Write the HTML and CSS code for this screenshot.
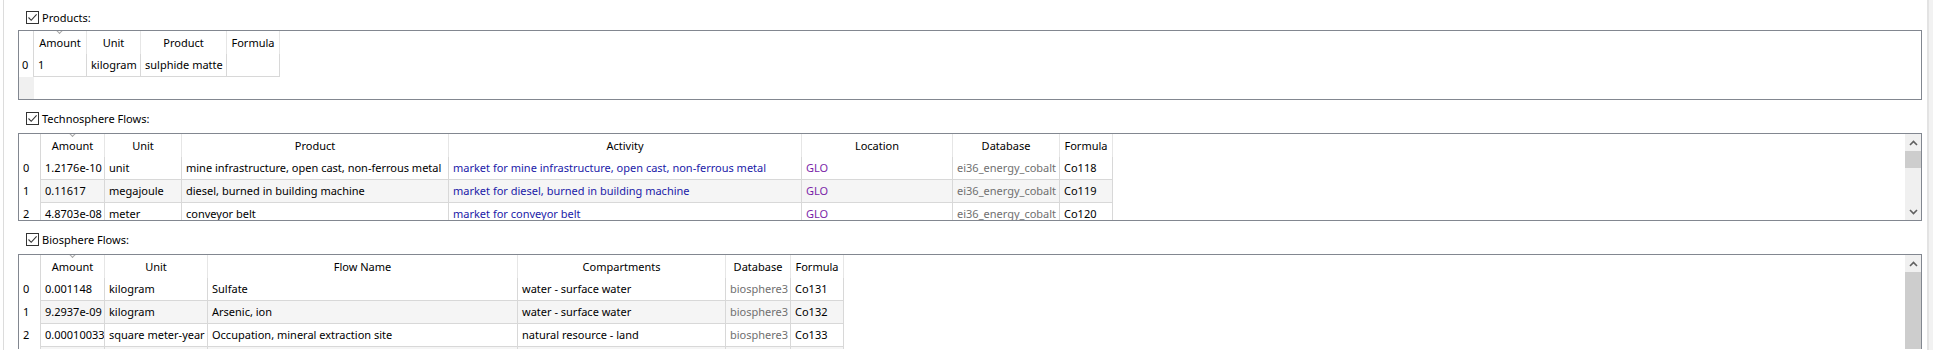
FILE: index.html
```html
<html>
<head>
  <link rel="stylesheet" href="styles.css">
</head>
<body>
  <div class="window">
    <div class="edge-left"></div>

    <div class="panel">

      <section class="block">
        <label class="toggle">
          <span class="box"><svg width="11" height="11" viewBox="0 0 11 11"><path d="M1.5 5.5 L4.2 8.3 L9.6 2.4" fill="none" stroke="#333" stroke-width="1.1"/></svg></span>
          Products:
        </label>
        <div class="grid products">
          <div class="grid-view">
            <div class="row head">
              <div class="cell corner"></div>
              <div class="cell sorted">Amount</div>
              <div class="cell">Unit</div>
              <div class="cell">Product</div>
              <div class="cell">Formula</div>
            </div>
            <div class="row">
              <div class="cell idx">0</div>
              <div class="cell">1</div>
              <div class="cell">kilogram</div>
              <div class="cell">sulphide matte</div>
              <div class="cell"></div>
            </div>
            <div class="filler"><div class="filler-idx"></div></div>
          </div>
        </div>
      </section>

      <section class="block">
        <label class="toggle">
          <span class="box"><svg width="11" height="11" viewBox="0 0 11 11"><path d="M1.5 5.5 L4.2 8.3 L9.6 2.4" fill="none" stroke="#333" stroke-width="1.1"/></svg></span>
          Technosphere Flows:
        </label>
        <div class="grid techno">
          <div class="grid-view">
            <div class="row head">
              <div class="cell corner"></div>
              <div class="cell sorted">Amount</div>
              <div class="cell">Unit</div>
              <div class="cell">Product</div>
              <div class="cell">Activity</div>
              <div class="cell">Location</div>
              <div class="cell">Database</div>
              <div class="cell">Formula</div>
            </div>
            <div class="row">
              <div class="cell idx">0</div>
              <div class="cell">1.2176e-10</div>
              <div class="cell">unit</div>
              <div class="cell">mine infrastructure, open cast, non-ferrous metal</div>
              <div class="cell link">market for mine infrastructure, open cast, non-ferrous metal</div>
              <div class="cell loc">GLO</div>
              <div class="cell db">ei36_energy_cobalt</div>
              <div class="cell">Co118</div>
            </div>
            <div class="row alt">
              <div class="cell idx">1</div>
              <div class="cell">0.11617</div>
              <div class="cell">megajoule</div>
              <div class="cell">diesel, burned in building machine</div>
              <div class="cell link">market for diesel, burned in building machine</div>
              <div class="cell loc">GLO</div>
              <div class="cell db">ei36_energy_cobalt</div>
              <div class="cell">Co119</div>
            </div>
            <div class="row">
              <div class="cell idx">2</div>
              <div class="cell">4.8703e-08</div>
              <div class="cell">meter</div>
              <div class="cell">conveyor belt</div>
              <div class="cell link">market for conveyor belt</div>
              <div class="cell loc">GLO</div>
              <div class="cell db">ei36_energy_cobalt</div>
              <div class="cell">Co120</div>
            </div>
          </div>
          <div class="vscroll">
            <div class="sb-btn"><svg width="9" height="6" viewBox="0 0 9 6"><path d="M1 5 L4.5 1.5 L8 5" fill="none" stroke="#606060" stroke-width="1.6"/></svg></div>
            <div class="sb-track"><div class="sb-thumb"></div></div>
            <div class="sb-btn"><svg width="9" height="6" viewBox="0 0 9 6"><path d="M1 1 L4.5 4.5 L8 1" fill="none" stroke="#606060" stroke-width="1.6"/></svg></div>
          </div>
        </div>
      </section>

      <section class="block">
        <label class="toggle">
          <span class="box"><svg width="11" height="11" viewBox="0 0 11 11"><path d="M1.5 5.5 L4.2 8.3 L9.6 2.4" fill="none" stroke="#333" stroke-width="1.1"/></svg></span>
          Biosphere Flows:
        </label>
        <div class="grid bio">
          <div class="grid-view">
            <div class="row head">
              <div class="cell corner"></div>
              <div class="cell sorted">Amount</div>
              <div class="cell">Unit</div>
              <div class="cell">Flow Name</div>
              <div class="cell">Compartments</div>
              <div class="cell">Database</div>
              <div class="cell">Formula</div>
            </div>
            <div class="row">
              <div class="cell idx">0</div>
              <div class="cell">0.001148</div>
              <div class="cell">kilogram</div>
              <div class="cell">Sulfate</div>
              <div class="cell">water - surface water</div>
              <div class="cell db">biosphere3</div>
              <div class="cell">Co131</div>
            </div>
            <div class="row alt">
              <div class="cell idx">1</div>
              <div class="cell">9.2937e-09</div>
              <div class="cell">kilogram</div>
              <div class="cell">Arsenic, ion</div>
              <div class="cell">water - surface water</div>
              <div class="cell db">biosphere3</div>
              <div class="cell">Co132</div>
            </div>
            <div class="row">
              <div class="cell idx">2</div>
              <div class="cell">0.00010033</div>
              <div class="cell">square meter-year</div>
              <div class="cell">Occupation, mineral extraction site</div>
              <div class="cell">natural resource - land</div>
              <div class="cell db">biosphere3</div>
              <div class="cell">Co133</div>
            </div>
            <div class="row alt">
              <div class="cell idx"></div>
              <div class="cell"></div>
              <div class="cell"></div>
              <div class="cell"></div>
              <div class="cell"></div>
              <div class="cell"></div>
              <div class="cell"></div>
            </div>
          </div>
          <div class="vscroll">
            <div class="sb-btn"><svg width="9" height="6" viewBox="0 0 9 6"><path d="M1 5 L4.5 1.5 L8 5" fill="none" stroke="#606060" stroke-width="1.6"/></svg></div>
            <div class="sb-track"><div class="sb-thumb long"></div></div>
          </div>
        </div>
      </section>

    </div>

    <div class="edge-right"><div class="edge-line"></div></div>
  </div>
</body>
</html>
```

FILE: styles.css
```css
body {
  margin: 0;
  height: 350px;
  overflow: hidden;
  background: #ffffff;
  font-family: 'Noto Sans', sans-serif;
  font-size: 11px;
  color: #000000;
}

.window {
  display: flex;
  height: 350px;
}

.edge-left {
  width: 3px;
  border-right: 1px solid #dcdcdc;
}

.panel {
  flex: 1;
  padding: 0 4px 0 14px;
  min-width: 0;
}

.edge-right {
  width: 9px;
  display: flex;
}

.edge-line {
  width: 2px;
  background: #e3e3e3;
  margin-left: 1px;
  border-right: 4px solid #f2f2f2;
}

.block {
  margin-top: 9px;
}

.block:first-child {
  margin-top: 8px;
}

.toggle {
  display: flex;
  align-items: center;
  height: 18px;
  padding-left: 8px;
  gap: 3px;
  white-space: nowrap;
}

.box {
  width: 11px;
  height: 11px;
  border: 1px solid #333333;
  display: flex;
}

.grid {
  margin-top: 6px;
  border: 1px solid #828790;
  display: flex;
  box-sizing: border-box;
  overflow: hidden;
}

.grid.products {
  margin-top: 4px;
  height: 70px;
}

.grid.techno {
  height: 88px;
}

/* runs off the bottom of the window, so no bottom edge */
.grid.bio {
  height: 95px;
  border-bottom: none;
}

.grid-view {
  flex: 1;
  display: flex;
  flex-direction: column;
  overflow: hidden;
}

.row {
  display: grid;
  height: 23px;
  flex: none;
}

.products .row {
  grid-template-columns: 15px 53px 54px 86px 53px;
}

.techno .row {
  grid-template-columns: 22px 64px 77px 267px 353px 151px 107px 53px;
}

.bio .row {
  grid-template-columns: 22px 64px 103px 310px 208px 65px 53px;
}

.cell {
  box-sizing: border-box;
  border-right: 1px solid #d8d8d8;
  border-bottom: 1px solid #d8d8d8;
  padding: 0 4px;
  line-height: 22px;
  white-space: nowrap;
  overflow: hidden;
}

.row.alt .cell {
  background: #f5f5f5;
}

.row.alt .cell.idx {
  background: #ffffff;
}

.cell.idx {
  border-bottom: none;
  padding-left: 4px;
}

.products .cell.idx {
  padding-left: 3px;
}

.head .cell {
  text-align: center;
  border-bottom: none;
  border-right-color: #e6e6e6;
  line-height: 23px;
  position: relative;
}

.head .cell.corner {
  border-right-color: #d8d8d8;
}

.sorted::before {
  content: "";
  position: absolute;
  left: 50%;
  top: 0;
  width: 4px;
  height: 4px;
  margin-left: -3px;
  margin-top: -3px;
  border-right: 1px solid #a6a6a6;
  border-bottom: 1px solid #a6a6a6;
  transform: rotate(45deg);
}

.link {
  color: #1a1aa8;
}

.loc {
  color: #7a1fa8;
}

.db {
  color: #707070;
}

.filler {
  flex: 1;
  display: flex;
}

.filler-idx {
  width: 15px;
  background: #f0f0f0;
}

.vscroll {
  width: 16px;
  background: #f0f0f0;
  display: flex;
  flex-direction: column;
}

.sb-btn {
  height: 17px;
  display: flex;
  align-items: center;
  justify-content: center;
  flex: none;
}

.sb-track {
  flex: 1;
}

.sb-thumb {
  height: 17px;
  background: #cdcdcd;
}

.sb-thumb.long {
  height: 200px;
}
```
